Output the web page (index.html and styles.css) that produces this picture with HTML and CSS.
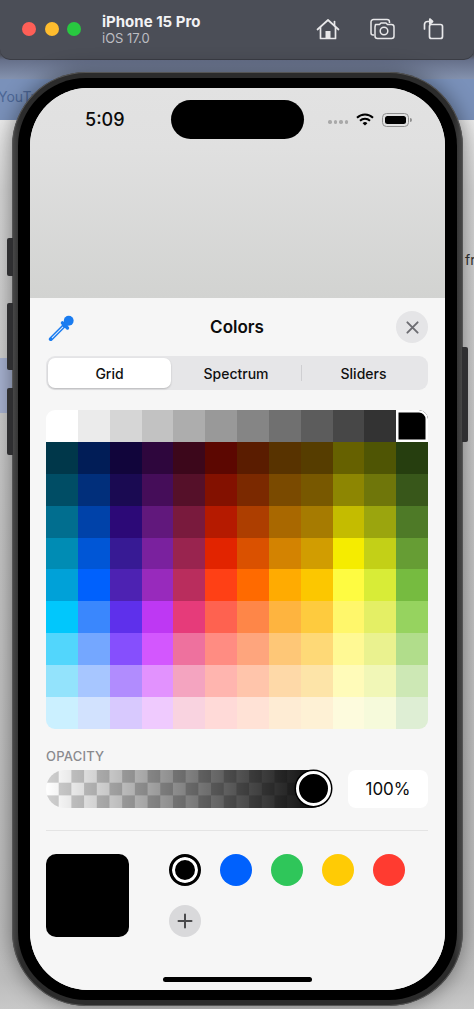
FILE: index.html
```html
<!DOCTYPE html>
<html lang="en">
<head>
<meta charset="utf-8">
<title>iPhone 15 Pro - Colors</title>
<link rel="stylesheet" href="styles.css">
</head>
<body>
<div class="stage">
  <div class="backdrop">
    <div class="bd-blur"></div>
    <div class="bd-band"><span class="bd-yt">YouTu</span></div>
    <div class="bd-page"></div>
    <span class="bd-fr">fr</span>
    <div class="bd-left-blue"></div>
  </div>

  <header class="toolbar">
    <div class="lights"><i class="light red"></i><i class="light yellow"></i><i class="light green"></i></div>
    <div class="device">
      <div class="device-name">iPhone 15 Pro</div>
      <div class="device-os">iOS 17.0</div>
    </div>
    <div class="tools">
      <svg class="tool t-home" viewBox="0 0 24 22" fill="none" stroke="#e8e8ea" stroke-width="1.7" stroke-linejoin="round" stroke-linecap="round"><path d="M1.500 11.500 12 2l10.500 9.500"/><path d="M18.500 3.500v4"/><path d="M4.500 9.500V20.500h15V9.500"/><rect x="9.500" y="13" width="5" height="7.500" fill="#e8e8ea" stroke="none"/></svg>
      <svg class="tool t-cam" viewBox="0 0 26 22" fill="none" stroke="#e8e8ea" stroke-width="1.5" stroke-linejoin="round"><path d="M4 17H3a2 2 0 0 1-2-2V4a2.500 2.500 0 0 1 2.500-2.500H17a2.500 2.500 0 0 1 2.500 2.500v1"/><path d="M5.500 6.500h4l1.500-1.500h5l1.500 1.500h4a2.500 2.500 0 0 1 2.500 2.500v9a2.500 2.500 0 0 1-2.500 2.500H7.500A2.500 2.500 0 0 1 5 18V9Z"/><circle cx="14" cy="13" r="3.800"/></svg>
      <svg class="tool t-rot" viewBox="0 0 21 22" fill="none" stroke="#e8e8ea" stroke-width="1.7" stroke-linejoin="round" stroke-linecap="round"><rect x="6.500" y="6.500" width="13" height="14" rx="2"/><path d="M1.500 11V6.500a3 3 0 0 1 3-3H8"/><path d="M6.800 1 9.600 3.500 6.800 6Z" fill="#e8e8ea"/></svg>
    </div>
  </header>

  <div class="phone">
    <i class="side-btn b1"></i><i class="side-btn b2"></i><i class="side-btn b3"></i><i class="side-btn b4"></i>
    <div class="bezel">
      <div class="screen">
        <div class="top-area">
          <div class="status">
            <div class="time">5:09</div>
            <div class="island"></div>
            <div class="status-icons">
              <div class="dots"><i></i><i></i><i></i><i></i></div>
              <svg class="wifi" viewBox="0 0 18 13" fill="none" stroke="#000" stroke-linecap="butt"><path d="M1 4.800a11.500 11.500 0 0 1 16 0" stroke-width="2"/><path d="M4 7.800a7.200 7.200 0 0 1 10 0" stroke-width="2"/><path d="M9 12.600 6.600 10.200a3.400 3.400 0 0 1 4.800 0Z" fill="#000" stroke="none"/></svg>
              <div class="battery"><div class="battery-fill"></div></div>
              <i class="battery-cap"></i>
            </div>
          </div>
        </div>

        <section class="sheet">
          <div class="sheet-head">
            <svg class="dropper" viewBox="0 0 28 28" fill="none" stroke-linecap="round">
              <path d="M3 26 18 11" stroke="#1a7cf0" stroke-width="4.200"/>
              <path d="M4.600 24.400 17 12" stroke="#d8e8fb" stroke-width="1.200"/>
              <path d="M15.500 8.500 21 14" stroke="#1a7cf0" stroke-width="3.600"/>
              <circle cx="22.300" cy="6.200" r="5.300" fill="#1a7cf0"/>
              <path d="M18 10.500 20 8" stroke="#1a7cf0" stroke-width="6"/>
            </svg>
            <h1 class="title">Colors</h1>
            <button class="close" type="button" aria-label="Close">
              <svg viewBox="0 0 14 14" fill="none" stroke="#6d6d72" stroke-width="2.100" stroke-linecap="round"><path d="M1.500 1.500 12.500 12.500M12.500 1.500 1.500 12.500"/></svg>
            </button>
          </div>

          <div class="segments">
            <div class="seg active">Grid</div>
            <div class="seg">Spectrum</div>
            <div class="seg seg-sep">Sliders</div>
          </div>

          <div class="grid" id="grid">
            <i style="background:#ffffff"></i><i style="background:#ebebeb"></i><i style="background:#d6d6d6"></i><i style="background:#c2c2c2"></i><i style="background:#adadad"></i><i style="background:#999999"></i><i style="background:#858585"></i><i style="background:#707070"></i><i style="background:#5c5c5c"></i><i style="background:#474747"></i><i style="background:#333333"></i><i class="picked" style="background:#000000"></i>
            <i style="background:#00374a"></i><i style="background:#011d57"></i><i style="background:#11053b"></i><i style="background:#2e063d"></i><i style="background:#3c071b"></i><i style="background:#5c0701"></i><i style="background:#5a1c00"></i><i style="background:#583300"></i><i style="background:#563d00"></i><i style="background:#666100"></i><i style="background:#4f5504"></i><i style="background:#263e0f"></i>
            <i style="background:#004d65"></i><i style="background:#012f7b"></i><i style="background:#1a0a52"></i><i style="background:#450d59"></i><i style="background:#551029"></i><i style="background:#831100"></i><i style="background:#7b2900"></i><i style="background:#7a4a00"></i><i style="background:#785800"></i><i style="background:#8d8602"></i><i style="background:#6f760a"></i><i style="background:#38571a"></i>
            <i style="background:#016e8f"></i><i style="background:#0042a9"></i><i style="background:#2c0977"></i><i style="background:#61187c"></i><i style="background:#791a3d"></i><i style="background:#b51a00"></i><i style="background:#ad3e00"></i><i style="background:#a96800"></i><i style="background:#a67b01"></i><i style="background:#c4bc00"></i><i style="background:#9ba50e"></i><i style="background:#4e7a27"></i>
            <i style="background:#008cb4"></i><i style="background:#0056d6"></i><i style="background:#371a94"></i><i style="background:#7a219e"></i><i style="background:#99244f"></i><i style="background:#e22400"></i><i style="background:#da5100"></i><i style="background:#d38301"></i><i style="background:#d19d01"></i><i style="background:#f5ec00"></i><i style="background:#c3d017"></i><i style="background:#669d34"></i>
            <i style="background:#00a1d8"></i><i style="background:#0061fd"></i><i style="background:#4d22b2"></i><i style="background:#982abc"></i><i style="background:#b92d5d"></i><i style="background:#ff4015"></i><i style="background:#ff6a00"></i><i style="background:#ffab01"></i><i style="background:#fcc700"></i><i style="background:#fefb41"></i><i style="background:#d8ec37"></i><i style="background:#76bb40"></i>
            <i style="background:#01c7fc"></i><i style="background:#3a87fd"></i><i style="background:#5e30eb"></i><i style="background:#be38f3"></i><i style="background:#e63b7a"></i><i style="background:#fe6250"></i><i style="background:#fe8648"></i><i style="background:#feb43f"></i><i style="background:#fecb3e"></i><i style="background:#fff76b"></i><i style="background:#e4ef65"></i><i style="background:#96d35f"></i>
            <i style="background:#52d6fc"></i><i style="background:#74a7ff"></i><i style="background:#864ffd"></i><i style="background:#d357fe"></i><i style="background:#ee719e"></i><i style="background:#ff8c82"></i><i style="background:#fea57d"></i><i style="background:#fec777"></i><i style="background:#fed977"></i><i style="background:#fff994"></i><i style="background:#eaf28f"></i><i style="background:#b1dd8b"></i>
            <i style="background:#93e3fc"></i><i style="background:#a7c6ff"></i><i style="background:#b18cfe"></i><i style="background:#e292fe"></i><i style="background:#f4a4c0"></i><i style="background:#ffb5af"></i><i style="background:#ffc5ab"></i><i style="background:#fed9a8"></i><i style="background:#fde4a8"></i><i style="background:#fffbb9"></i><i style="background:#f1f7b7"></i><i style="background:#cde8b5"></i>
            <i style="background:#cbf0ff"></i><i style="background:#d2e2fe"></i><i style="background:#d8c9fe"></i><i style="background:#efcafe"></i><i style="background:#f9d3e0"></i><i style="background:#ffdad8"></i><i style="background:#ffe2d6"></i><i style="background:#feecd4"></i><i style="background:#fef1d5"></i><i style="background:#fdfbdd"></i><i style="background:#f6fadb"></i><i style="background:#deeed4"></i>
          </div>

          <div class="opacity-label">OPACITY</div>
          <div class="opacity-row">
            <div class="slider"><div class="thumb"></div></div>
            <div class="percent">100%</div>
          </div>

          <div class="divider"></div>

          <div class="bottom">
            <div class="current"></div>
            <div class="palette">
              <i class="dot selected"></i>
              <i class="dot blue"></i>
              <i class="dot green-dot"></i>
              <i class="dot amber"></i>
              <i class="dot coral"></i>
              <i class="dot add">
                <svg viewBox="0 0 16 16" fill="none" stroke="#4a4a4c" stroke-width="2" stroke-linecap="round"><path d="M8 1.500v13M1.500 8h13"/></svg>
              </i>
            </div>
          </div>

          <div class="home-indicator"></div>
        </section>
      </div>
    </div>
  </div>
</div>
</body>
</html>
```
FILE: styles.css
```css
* { box-sizing: border-box; }
html, body { margin: 0; padding: 0; }
body {
  width: 474px;
  height: 1009px;
  overflow: hidden;
  font-family: Inter, "Liberation Sans", sans-serif;
  background: #dcdcdc;
}
i { display: block; font-style: normal; }

.stage {
  position: relative;
  width: 474px;
  height: 1009px;
  overflow: hidden;
}

/* blurred desktop behind the simulator */
.backdrop { position: absolute; inset: 0; }
.bd-blur { height: 79px; background: linear-gradient(#4b4e57 55px, #66708a 60px, #8492ae 79px); }
.bd-band { height: 41px; background: #7a91ba; position: relative; overflow: hidden; }
.bd-yt { position: absolute; left: -2px; top: 9px; font-size: 14px; color: #4c6796; }
.bd-page { height: 889px; background: linear-gradient(#ececec, #d8d8d8 70px, #c8c8c8 400px, #bdbdbd 860px, #c8c8c8); }
.bd-fr { position: absolute; left: 465px; top: 251px; font-size: 14px; color: #333; }
.bd-left-blue { position: absolute; left: 0; top: 358px; width: 12px; height: 55px; background: #a9b4d3; }

.toolbar {
  position: relative;
  height: 59px;
  background: #4b4e57;
  border-radius: 0 0 10px 10px;
  display: flex;
  align-items: center;
  padding: 0 0 1px 22px;
  box-shadow: 0 1px 0 #3b3d45;
}
.lights { display: flex; gap: 8.500px; }
.light { width: 14px; height: 14px; border-radius: 50%; }
.red { background: #fe5f57; }
.yellow { background: #febc2e; }
.green { background: #28c840; }
.device { margin-left: 21px; }
.device-name { font-size: 15px; font-weight: 700; color: #f2f2f4; line-height: 17px; }
.device-os { font-size: 13px; color: #bcbdc2; line-height: 15px; margin-top: 1px; }
.tools { margin-left: auto; margin-right: 30px; display: flex; align-items: center; }
.tool { display: block; }
.t-home { width: 24px; height: 22px; }
.t-cam { width: 26px; height: 22px; margin-left: 30px; }
.t-rot { width: 21px; height: 22px; margin-left: 27px; }

.phone {
  position: relative;
  width: 451px;
  height: 934px;
  margin: 13px 0 0 12px;
  padding: 6px;
  border-radius: 74px;
  background: linear-gradient(90deg, #4a4a4a, #2b2b2b 2%, #2b2b2b 98%, #4a4a4a);
  box-shadow: 0 0 22px rgba(0, 0, 0, .45), inset 0 0 0 1px #555;
}
.side-btn { position: absolute; width: 6px; background: #2f2f31; }
.b1 { left: -5px; top: 166px; height: 38px; border-radius: 2px 0 0 2px; }
.b2 { left: -5px; top: 231px; height: 67px; border-radius: 2px 0 0 2px; }
.b3 { left: -5px; top: 316px; height: 67px; border-radius: 2px 0 0 2px; }
.b4 { right: -5px; top: 275px; height: 95px; border-radius: 0 2px 2px 0; }

.bezel {
  height: 100%;
  padding: 10px 12px;
  border-radius: 68px;
  background: #000;
}
.screen {
  height: 100%;
  border-radius: 58px;
  overflow: hidden;
  display: flex;
  flex-direction: column;
  background: #f6f6f6;
}

.top-area {
  height: 210px;
  flex: none;
  background: linear-gradient(#e2e2e2, #e0e0e0 60px, #d2d3d1);
}
.status {
  display: flex;
  align-items: flex-start;
  padding: 12px 0 0 55px;
}
.time { width: 86px; font-size: 18px; font-weight: 500; color: #0a0a0a; line-height: 40px; }
.island { width: 133px; height: 39px; background: #000; border-radius: 20px; }
.status-icons { display: flex; align-items: center; margin-left: 24px; height: 38px; margin-top: 1px; }
.dots { display: flex; gap: 2px; margin-top: 4px; }
.dots i { width: 3.500px; height: 3.500px; border-radius: 50%; background: #a9a9a9; }
.wifi { width: 18px; height: 13px; margin-left: 8px; margin-top: -2px; }
.battery {
  width: 27px; height: 14px; margin-left: 8px; padding: 2px;
  border: 1px solid #8f8f8f; border-radius: 4.500px; margin-top: -1px;
}
.battery-fill { height: 100%; background: #000; border-radius: 2.500px; }
.battery-cap { width: 2px; height: 4px; background: #8f8f8f; border-radius: 0 2px 2px 0; margin-left: 1px; margin-top: -1px; }

.sheet {
  flex: 1;
  position: relative;
  background: #f6f6f6;
  border-radius: 13px 13px 0 0;
  padding: 13px 17px 0 16px;
}
.sheet-head {
  display: grid;
  grid-template-columns: 32px 1fr 32px;
  align-items: center;
  height: 32px;
}
.dropper { width: 26px; height: 26px; display: block; margin: 1px 0 0 2px; }
.title { margin: 0; text-align: center; font-size: 17px; font-weight: 600; color: #0c0c0c; }
.close {
  width: 32px; height: 32px; padding: 0; border: 0; border-radius: 50%;
  background: #e5e5e7; display: flex; align-items: center; justify-content: center;
}
.close svg { width: 13px; height: 13px; display: block; }

.segments {
  margin-top: 13px;
  height: 34px;
  padding: 2px;
  background: #e6e6e8;
  border-radius: 9px;
  display: grid;
  grid-template-columns: 123px 130px 1fr;
  font-size: 14px;
  font-weight: 500;
  color: #111;
}
.seg { display: flex; align-items: center; justify-content: center; position: relative; }
.seg.active { background: #fff; border-radius: 7px; box-shadow: 0 1px 2px rgba(0, 0, 0, .2); }
.seg-sep::before {
  content: ""; position: absolute; left: 0; top: 7px; bottom: 7px; width: 1px; background: #cfcfd2;
}

.grid {
  margin-top: 20px;
  display: grid;
  grid-template-columns: repeat(12, 1fr);
  grid-template-rows: repeat(10, 31.900px);
  border-radius: 9px;
  overflow: hidden;
}
.picked { box-shadow: inset 0 0 0 2.500px #fff; border-top-right-radius: 9px; }

.opacity-label {
  margin-top: 19px;
  font-size: 13px;
  font-weight: 500;
  line-height: 16px;
  color: #8a8a8e;
  letter-spacing: 0.200px;
}
.opacity-row { margin-top: 6px; display: flex; align-items: center; justify-content: space-between; }
.slider {
  position: relative;
  width: 285px;
  height: 38px;
  border-radius: 19px;
  background:
    linear-gradient(90deg, rgba(0, 0, 0, 0), #000 100%),
    conic-gradient(#fff 25%, #d0d0d0 0 50%, #fff 0 75%, #d0d0d0 0) 0 0 / 25.400px 25.400px;
}
.thumb {
  position: absolute;
  right: 0;
  top: 1.500px;
  width: 35px;
  height: 35px;
  border-radius: 50%;
  background: #000;
  border: 3px solid #fff;
  box-shadow: 0 0 0 1.500px #000;
}
.percent {
  width: 80px;
  height: 38px;
  background: #fff;
  border-radius: 8px;
  display: flex;
  align-items: center;
  justify-content: center;
  font-size: 17px;
  color: #0c0c0c;
}
.divider { margin-top: 22px; height: 1px; background: #e4e4e4; }

.bottom { margin-top: 23px; display: flex; align-items: flex-start; }
.current { width: 83px; height: 83px; background: #000; border-radius: 10px; flex: none; }
.palette {
  margin-left: 40px;
  display: grid;
  grid-template-columns: repeat(5, 32px);
  grid-auto-rows: 32px;
  column-gap: 19px;
  row-gap: 19px;
}
.dot { width: 32px; height: 32px; border-radius: 50%; }
.selected { background: #000; border: 3px solid #000; box-shadow: inset 0 0 0 3px #fff; }
.blue { background: #0061fd; }
.green-dot { background: #2fc65a; }
.amber { background: #ffcb05; }
.coral { background: #ff3b30; }
.add { background: #d9d9db; display: flex; align-items: center; justify-content: center; }
.add svg { width: 16px; height: 16px; display: block; }

.home-indicator {
  position: absolute;
  left: 133px;
  bottom: 8px;
  width: 149px;
  height: 5px;
  border-radius: 3px;
  background: #000;
}
```
